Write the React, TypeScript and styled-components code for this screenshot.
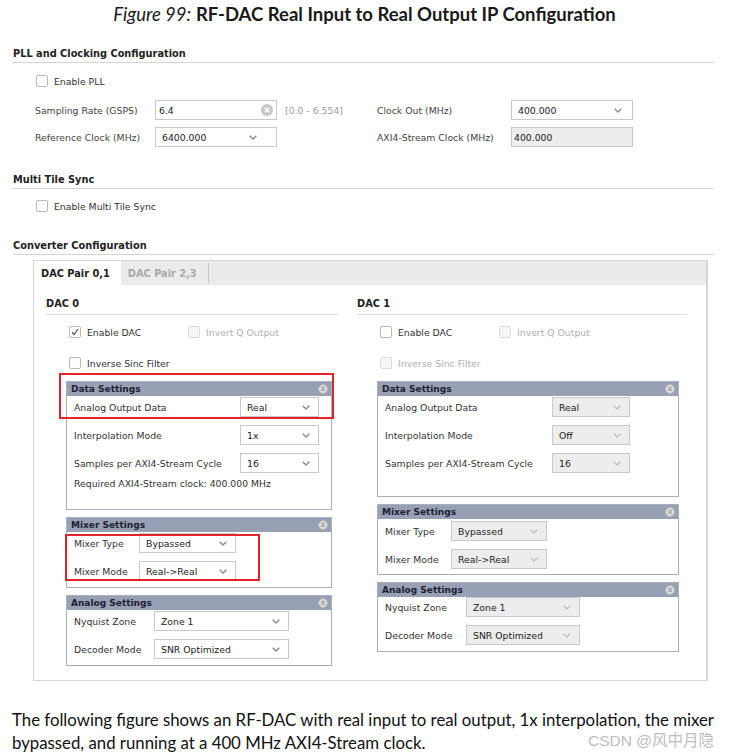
import React from 'react';
import styled, { createGlobalStyle } from 'styled-components';

const GlobalStyle = createGlobalStyle`
  body {
    margin: 0;
    background: #fff;
  }
  * {
    box-sizing: border-box;
  }
`;

const Page = styled.div`
  width: 729px;
  font-family: "DejaVu Sans", Verdana, sans-serif;
  font-size: 9.3px;
  color: #333;
`;

const FigureTitle = styled.div`
  height: 28px;
  line-height: 28px;
  text-align: center;
  font-family: Lato, sans-serif;
  font-size: 18.5px;
  color: #1a1a1a;
`;

const FigureNo = styled.span`
  font-style: italic;
`;

const FigureName = styled.span`
  font-weight: 700;
`;

const Section = styled.div`
  margin: 0 15px 0 13px;
`;

const SectionTitle = styled.div<{ $mt: number }>`
  margin-top: ${p => p.$mt}px;
  height: 17px;
  line-height: 15px;
  font-size: 9.8px;
  font-weight: 700;
  color: #222;
  border-bottom: 1px solid #d6d6d6;
`;

const CheckRow = styled.div<{ $mt: number }>`
  margin-top: ${p => p.$mt}px;
  height: 18px;
  padding-left: 23px;
  display: flex;
  align-items: center;
`;

const CheckItem = styled.label<{ $disabled?: boolean; $w?: number }>`
  display: inline-flex;
  align-items: center;
  gap: 6px;
  width: ${p => (p.$w ? `${p.$w}px` : 'auto')};
  color: ${p => (p.$disabled ? '#b0b0b0' : '#333')};
`;

const CheckBox = styled.span<{ $disabled?: boolean }>`
  width: 12px;
  height: 12px;
  border: 1px solid ${p => (p.$disabled ? '#dcdcdc' : '#b9b9b9')};
  border-radius: 2px;
  background: ${p => (p.$disabled ? '#f6f6f6' : '#fff')};
  display: flex;
  align-items: center;
  justify-content: center;
`;

const FieldGrid = styled.div`
  margin: 10px 0 0 22px;
  display: grid;
  grid-template-columns: 120px 122px 100px 134px 122px;
  grid-auto-rows: 20px;
  row-gap: 7px;
  align-items: center;
`;

const FieldLabel = styled.span`
  color: #444;
`;

const RangeText = styled.span`
  padding-left: 8px;
  color: #9c9c9c;
`;

const Box = styled.div<{ $w?: number; $disabled?: boolean; $padL?: number; $padR?: number }>`
  width: ${p => (p.$w ? `${p.$w}px` : '100%')};
  height: 20px;
  display: flex;
  align-items: center;
  justify-content: space-between;
  padding: 0 ${p => p.$padR ?? 8}px 0 ${p => p.$padL ?? 6}px;
  border: 1px solid #c9c9c9;
  background: ${p => (p.$disabled ? '#ededed' : '#fff')};
  color: #222;
  white-space: nowrap;
`;

const TabPanel = styled.div`
  margin: 5px 0 0 20px;
  width: 675px;
`;

const TabBar = styled.div`
  height: 25px;
  display: flex;
  align-items: center;
  background: #ebebeb;
  border: 1px solid #d6d6d6;
  border-bottom: none;
  border-right-width: 2px;
`;

const Tab = styled.div<{ $active?: boolean }>`
  height: 100%;
  display: flex;
  align-items: center;
  padding: 0 11px 0 7px;
  font-size: 9.8px;
  font-weight: 700;
  background: ${p => (p.$active ? '#fff' : 'transparent')};
  color: ${p => (p.$active ? '#222' : '#a9a9a9')};
`;

const TabDivider = styled.div`
  width: 1px;
  height: 20px;
  background: #c8c8c8;
`;

const TabBody = styled.div`
  height: 396px;
  padding: 11px 18px 0 12px;
  display: flex;
  gap: 19px;
  border: 1px solid #d6d6d6;
  border-top: none;
  border-right-width: 2px;
`;

const DacColumn = styled.div<{ $w: number }>`
  position: relative;
  width: ${p => p.$w}px;
`;

const ColumnTitle = styled.div`
  height: 19px;
  line-height: 16px;
  font-size: 9.8px;
  font-weight: 700;
  color: #222;
  border-bottom: 1px solid #dedede;
`;

const PanelStack = styled.div<{ $mr: number }>`
  margin: 9px ${p => p.$mr}px 0 20px;
  display: flex;
  flex-direction: column;
  gap: 7px;
`;

const Group = styled.div`
  border: 1px solid #a9afc1;
`;

const GroupHeader = styled.div`
  height: 14px;
  padding: 0 3px 0 4px;
  display: flex;
  align-items: center;
  justify-content: space-between;
  background: #98a0b5;
  font-size: 9px;
  font-weight: 700;
  color: #1d2132;
`;

const GroupBody = styled.div<{ $pt: number; $pb: number }>`
  padding: ${p => p.$pt}px 6px ${p => p.$pb}px 7px;
  display: flex;
  flex-direction: column;
  gap: 8px;
`;

const GroupRow = styled.div<{ $labelW: number }>`
  height: 20px;
  display: grid;
  grid-template-columns: ${p => p.$labelW}px auto;
  align-items: center;
  color: #333;
`;

const Note = styled.div`
  margin-top: -3px;
  height: 12px;
  line-height: 12px;
  color: #333;
`;

const Callout = styled.div<{ $x: number; $y: number; $w: number; $h: number }>`
  position: absolute;
  left: ${p => p.$x}px;
  top: ${p => p.$y}px;
  width: ${p => p.$w}px;
  height: ${p => p.$h}px;
  border: 2px solid #e3242b;
  pointer-events: none;
`;

const Footer = styled.div`
  margin-top: 27px;
  padding-left: 12px;
  font-family: Lato, sans-serif;
  font-size: 16.8px;
  line-height: 23px;
  color: #111;
  white-space: nowrap;
`;

const FooterLine = styled.div`
  display: flex;
  align-items: center;
  justify-content: space-between;
  padding-right: 15px;
`;

const Watermark = styled.span`
  margin-top: -4px;
  font-family: "Liberation Sans", "Noto Sans CJK SC", sans-serif;
  font-size: 15.5px;
  line-height: 16px;
  color: #bdbdbd;
`;

const Chevron = ({ disabled }: { disabled?: boolean }) => (
  <svg width="8" height="5" viewBox="0 0 8 5">
    <path d="M0.7 0.7 L4 4 L7.3 0.7" fill="none" stroke={disabled ? '#c2c2c2' : '#8a8a8a'} strokeWidth="1.4" />
  </svg>
);

const ClearIcon = () => (
  <svg width="12" height="12" viewBox="0 0 12 12">
    <circle cx="6" cy="6" r="6" fill="#c7c7c7" />
    <path d="M3.8 3.8 L8.2 8.2 M8.2 3.8 L3.8 8.2" stroke="#fff" strokeWidth="1.6" />
  </svg>
);

const CollapseIcon = () => (
  <svg width="10" height="10" viewBox="0 0 10 10">
    <circle cx="5" cy="5" r="4.5" fill="#dedede" stroke="#b4b4b4" />
    <path d="M3 4.6 L5 2.8 L7 4.6 M3 7 L5 5.2 L7 7" fill="none" stroke="#7d7d7d" strokeWidth="0.9" />
  </svg>
);

const Check = ({ label, checked, disabled, w }: { label: string; checked?: boolean; disabled?: boolean; w?: number }) => (
  <CheckItem $disabled={disabled} $w={w}>
    <CheckBox $disabled={disabled}>
      {checked && (
        <svg width="10" height="10" viewBox="0 0 10 10">
          <path d="M2 5.3 L4.2 7.5 L8 2" fill="none" stroke="#5a5a5a" strokeWidth="1.3" />
        </svg>
      )}
    </CheckBox>
    {label}
  </CheckItem>
);

const Select = ({ value, w, disabled, padR }: { value: string; w?: number; disabled?: boolean; padR?: number }) => (
  <Box $w={w} $disabled={disabled} $padR={padR}>
    <span>{value}</span>
    <Chevron disabled={disabled} />
  </Box>
);

type Row = { label: string; value: string };

const SettingsGroup = ({
  title,
  rows,
  labelW,
  selectW,
  disabled,
  pt,
  pb,
  note,
}: {
  title: string;
  rows: Row[];
  labelW: number;
  selectW: number;
  disabled?: boolean;
  pt: number;
  pb: number;
  note?: string;
}) => (
  <Group>
    <GroupHeader>
      {title}
      <CollapseIcon />
    </GroupHeader>
    <GroupBody $pt={pt} $pb={pb}>
      {rows.map(r => (
        <GroupRow key={r.label} $labelW={labelW}>
          <span>{r.label}</span>
          <Select value={r.value} w={selectW} disabled={disabled} />
        </GroupRow>
      ))}
      {note && <Note>{note}</Note>}
    </GroupBody>
  </Group>
);

export default function App() {
  return (
    <Page>
      <GlobalStyle />
      <FigureTitle>
        <FigureNo>Figure 99:</FigureNo> <FigureName>RF-DAC Real Input to Real Output IP Configuration</FigureName>
      </FigureTitle>

      <Section>
        <SectionTitle $mt={18}>PLL and Clocking Configuration</SectionTitle>
        <CheckRow $mt={9}>
          <Check label="Enable PLL" />
        </CheckRow>
        <FieldGrid>
          <FieldLabel>Sampling Rate (GSPS)</FieldLabel>
          <Box $padL={3} $padR={3}>
            <span>6.4</span>
            <ClearIcon />
          </Box>
          <RangeText>[0.0 - 6.554]</RangeText>
          <FieldLabel>Clock Out (MHz)</FieldLabel>
          <Select value="400.000" padR={10} />

          <FieldLabel>Reference Clock (MHz)</FieldLabel>
          <Select value="6400.000" padR={19} />
          <span />
          <FieldLabel>AXI4-Stream Clock (MHz)</FieldLabel>
          <Box $disabled $padL={2}>
            <span>400.000</span>
          </Box>
        </FieldGrid>

        <SectionTitle $mt={25}>Multi Tile Sync</SectionTitle>
        <CheckRow $mt={8}>
          <Check label="Enable Multi Tile Sync" />
        </CheckRow>

        <SectionTitle $mt={23}>Converter Configuration</SectionTitle>
        <TabPanel>
          <TabBar>
            <Tab $active>DAC Pair 0,1</Tab>
            <Tab>DAC Pair 2,3</Tab>
            <TabDivider />
          </TabBar>
          <TabBody>
            <DacColumn $w={292}>
              <ColumnTitle>DAC 0</ColumnTitle>
              <CheckRow $mt={8}>
                <Check label="Enable DAC" checked w={119} />
                <Check label="Invert Q Output" disabled />
              </CheckRow>
              <CheckRow $mt={13}>
                <Check label="Inverse Sinc Filter" />
              </CheckRow>
              <PanelStack $mr={6}>
                <SettingsGroup
                  title="Data Settings"
                  labelW={166}
                  selectW={79}
                  pt={1}
                  pb={19}
                  note="Required AXI4-Stream clock: 400.000 MHz"
                  rows={[
                    { label: 'Analog Output Data', value: 'Real' },
                    { label: 'Interpolation Mode', value: '1x' },
                    { label: 'Samples per AXI4-Stream Cycle', value: '16' },
                  ]}
                />
                <SettingsGroup
                  title="Mixer Settings"
                  labelW={65}
                  selectW={97}
                  pt={1}
                  pb={6}
                  rows={[
                    { label: 'Mixer Type', value: 'Bypassed' },
                    { label: 'Mixer Mode', value: 'Real->Real' },
                  ]}
                />
                <SettingsGroup
                  title="Analog Settings"
                  labelW={80}
                  selectW={135}
                  pt={1}
                  pb={6}
                  rows={[
                    { label: 'Nyquist Zone', value: 'Zone 1' },
                    { label: 'Decoder Mode', value: 'SNR Optimized' },
                  ]}
                />
              </PanelStack>
              <Callout $x={13} $y={77} $w={275} $h={46} />
              <Callout $x={19} $y={238} $w={195} $h={47} />
            </DacColumn>

            <DacColumn $w={330}>
              <ColumnTitle>DAC 1</ColumnTitle>
              <CheckRow $mt={8}>
                <Check label="Enable DAC" w={119} />
                <Check label="Invert Q Output" disabled />
              </CheckRow>
              <CheckRow $mt={13}>
                <Check label="Inverse Sinc Filter" disabled />
              </CheckRow>
              <PanelStack $mr={8}>
                <SettingsGroup
                  title="Data Settings"
                  labelW={167}
                  selectW={78}
                  disabled
                  pt={1}
                  pb={23}
                  rows={[
                    { label: 'Analog Output Data', value: 'Real' },
                    { label: 'Interpolation Mode', value: 'Off' },
                    { label: 'Samples per AXI4-Stream Cycle', value: '16' },
                  ]}
                />
                <SettingsGroup
                  title="Mixer Settings"
                  labelW={66}
                  selectW={96}
                  disabled
                  pt={2}
                  pb={5}
                  rows={[
                    { label: 'Mixer Type', value: 'Bypassed' },
                    { label: 'Mixer Mode', value: 'Real->Real' },
                  ]}
                />
                <SettingsGroup
                  title="Analog Settings"
                  labelW={81}
                  selectW={114}
                  disabled
                  pt={0}
                  pb={6}
                  rows={[
                    { label: 'Nyquist Zone', value: 'Zone 1' },
                    { label: 'Decoder Mode', value: 'SNR Optimized' },
                  ]}
                />
              </PanelStack>
            </DacColumn>
          </TabBody>
        </TabPanel>
      </Section>

      <Footer>
        The following figure shows an RF-DAC with real input to real output, 1x interpolation, the mixer
        <FooterLine>
          <span>bypassed, and running at a 400 MHz AXI4-Stream clock.</span>
          <Watermark>CSDN @风中月隐</Watermark>
        </FooterLine>
      </Footer>
    </Page>
  );
}
